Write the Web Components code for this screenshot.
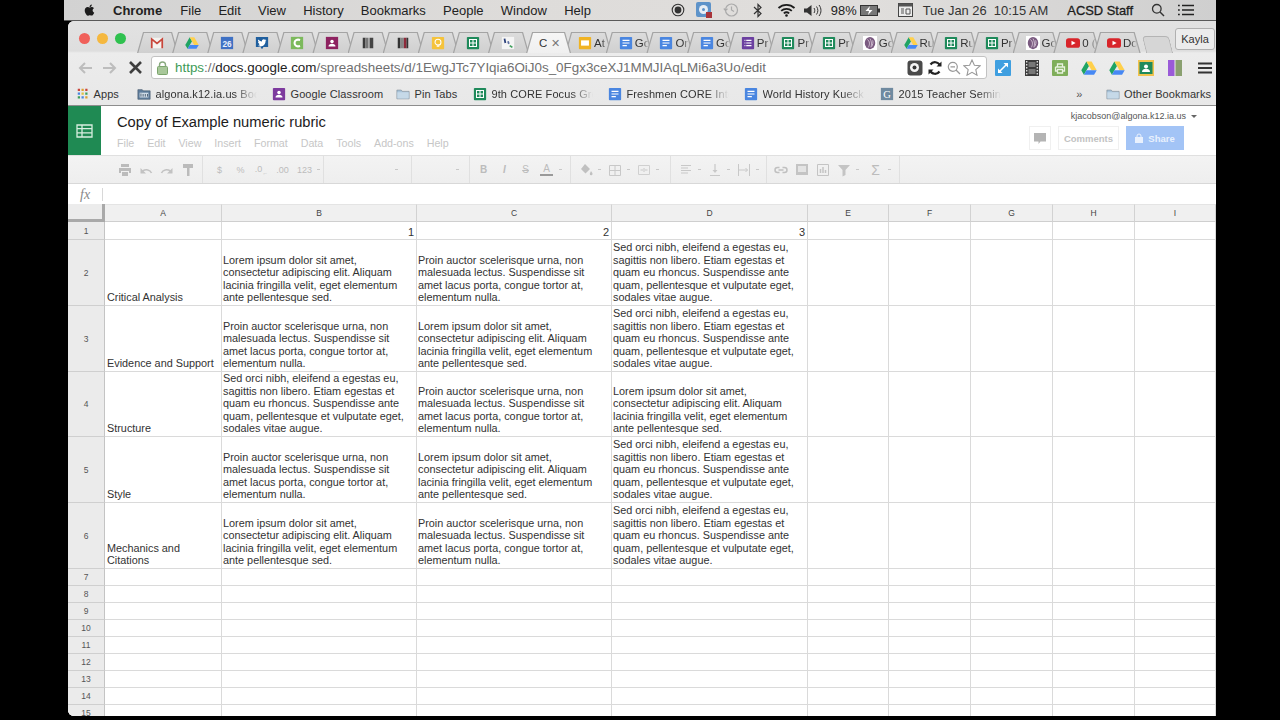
<!DOCTYPE html>
<html>
<head>
<meta charset="utf-8">
<title>Copy of Example numeric rubric</title>
<style>
  html, body { margin: 0; height: 720px; overflow: hidden; background: #000; font-family: "Liberation Sans", Arial, sans-serif; }
  #stage { width: 1152px; height: 716px; margin: 0 auto; display: flex; flex-direction: column; }
</style>
</head>
<body>
<div id="stage">
  <mac-menubar></mac-menubar>
  <browser-window>
    <tab-strip slot="tabs"></tab-strip>
    <nav-bar slot="nav"></nav-bar>
    <bookmarks-bar slot="bookmarks"></bookmarks-bar>
    <sheet-header></sheet-header>
    <sheet-toolbar></sheet-toolbar>
    <formula-bar></formula-bar>
    <sheet-grid></sheet-grid>
  </browser-window>
</div>

<script>
const FONT = '"Liberation Sans", Arial, sans-serif';

// favicons and bookmark icons, all on a 16 box
const DRIVE = `<path fill="#1fa463" d="M5.4 1.5 .3 10.3l2.6 4.4L8 5.9z"/><path fill="#ffd04b" d="M5.4 1.5h5.2l5.1 8.8h-5.2z"/><path fill="#4688f4" d="M2.9 14.7h10.2l2.6-4.4H5.5z"/>`;
const SHEET = `<rect x="1" y="1" width="14" height="14" rx="1" fill="#1f8a5b"/><path fill="none" stroke="#fff" stroke-width="1.2" d="M4 4h8v8H4zM4 8h8M8 4v8"/>`;
const DOC = `<rect x="1" y="1" width="14" height="14" rx="1" fill="#4a86e0"/><path stroke="#fff" stroke-width="1.3" d="M4 5h8M4 8h8M4 11h5"/>`;
const YT = `<rect x="0" y="2.5" width="16" height="11" rx="3" fill="#d8242a"/><path fill="#fff" d="M6.3 5.3v5.4L11 8z"/>`;
const PERSON = `<circle cx="8" cy="6.4" r="2" fill="#fff"/><path fill="#fff" d="M4 12c0-2.2 1.8-3.2 4-3.2s4 1 4 3.2z"/>`;
const CREST = `<rect x="0" y="0" width="16" height="16" fill="#fff"/><ellipse cx="8" cy="8" rx="6" ry="7" fill="#7a5a80"/><path fill="none" stroke="#d8c8d8" d="M5 4c3 2 3 6 1 9M8 3c2 3 2 7 1 10M11 5c1 2 0 5-1 7"/>`;
const FOLDER = `<path fill="#a9c4da" stroke="#7d8a96" stroke-width=".7" d="M1 3.5h5l1.2 1.5H15v8.5H1z"/><path fill="#c6d9e8" d="M1.5 6h13v7h-13z"/>`;
const ICONS = {
  gmail: `<rect x="1" y="2" width="14" height="12" fill="#f4f2ef"/><path fill="none" stroke="#c8473c" stroke-width="2" d="M2 14V3.5l6 5 6-5V14"/>`,
  drive: DRIVE,
  cal: `<rect x="1" y="1" width="14" height="14" fill="#3f71c4"/><text x="8" y="12.2" font-size="9.5" font-weight="700" text-anchor="middle" fill="#e6eefb" font-family="Liberation Sans">26</text>`,
  twitter: `<path fill="#1f5f9e" d="M1 1h14v11.5H9.7L8 15l-1.7-2.5H1z"/><g transform="translate(3 2.8) scale(.42)"><path fill="#fff" d="M23.95 4.57a10 10 0 0 1-2.82.77 4.96 4.96 0 0 0 2.16-2.72c-.95.55-2 .95-3.12 1.18a4.92 4.92 0 0 0-8.38 4.48C7.69 8.09 4.07 6.13 1.64 3.16a4.82 4.82 0 0 0-.67 2.48c0 1.71.87 3.21 2.19 4.1a4.9 4.9 0 0 1-2.23-.62v.06a4.92 4.92 0 0 0 3.95 4.83 5 5 0 0 1-2.21.08 4.94 4.94 0 0 0 4.6 3.42A9.87 9.87 0 0 1 0 19.54a14 14 0 0 0 7.56 2.21c9.05 0 14-7.5 14-13.98 0-.21 0-.42-.02-.63A9.94 9.94 0 0 0 24 4.59z"/></g>`,
  cgreen: `<rect x="1" y="1" width="14" height="14" fill="#7cb95c"/><path fill="none" stroke="#fff" stroke-width="2.4" d="M11.5 4.6C8 3.4 5.2 5 5.2 8s2.8 4.6 6.3 3.4"/>`,
  classroom: `<rect x="1" y="1" width="14" height="14" fill="#8e2260"/>${PERSON}`,
  classroomp: `<rect x="1" y="1" width="14" height="14" rx="1" fill="#7d3a9e"/>${PERSON}`,
  stripes: `<path fill="#3b3b3b" d="M2 2h3v12H2z"/><path fill="#777" d="M5 2h3v12H5z"/><path fill="#aaa" d="M8 2h2v12H8z"/><path fill="#444" d="M10 2h4v12h-4z"/>`,
  stripes2: `<path fill="#333" d="M2 2h3v12H2z"/><path fill="#888" d="M5 2h4v12H5z"/><path fill="#8e2a3a" d="M9 2h3v12H9z"/><path fill="#333" d="M12 2h2v12h-2z"/>`,
  keep: `<rect x="1" y="1" width="14" height="14" rx="1" fill="#f5c33b"/><circle cx="8" cy="7" r="3.4" fill="none" stroke="#fff" stroke-width="1.2"/><path stroke="#fff" stroke-width="1.4" d="M6.5 11.5h3"/>`,
  sheet: SHEET,
  pinwheel: `<rect x="1" y="1" width="14" height="14" fill="#f4f4f4"/><path stroke="#2a3f7a" stroke-width="2" d="M4 3l1 5"/><path stroke="#5c6f9f" stroke-width="2" d="M8 6l1 3"/><path stroke="#3fa05c" stroke-width="2" d="M10 11l3 2"/>`,
  slides: `<rect x="1" y="1" width="14" height="14" rx="1" fill="#f0b323"/><rect x="3.5" y="5" width="9" height="6" fill="#fff"/>`,
  doc: DOC,
  forms: `<rect x="1" y="1" width="14" height="14" rx="1" fill="#6b3fa0"/><path stroke="#fff" stroke-width="1.3" d="M6 5h6M6 8h6M6 11h6M4 5h1M4 8h1M4 11h1"/>`,
  crest: CREST,
  yt: YT,
  apps: `<rect x="1" y="1" width="3" height="3" fill="#c9463d"/><rect x="6" y="1" width="3" height="3" fill="#e0a030"/><rect x="11" y="1" width="3" height="3" fill="#c9463d"/><rect x="1" y="6" width="3" height="3" fill="#4a86e0"/><rect x="6" y="6" width="3" height="3" fill="#e0c040"/><rect x="11" y="6" width="3" height="3" fill="#3fa05c"/><rect x="1" y="11" width="3" height="3" fill="#3fa05c"/><rect x="6" y="11" width="3" height="3" fill="#4a86e0"/><rect x="11" y="11" width="3" height="3" fill="#e0a030"/>`,
  folder: FOLDER,
  bmfolder: `<path fill="#5e7d9c" stroke="#42566b" stroke-width=".7" d="M1 3h5l1 1.4h8V14H1z"/><rect x="3" y="6.5" width="10" height="5.5" fill="#cfdbe6"/><path stroke="#42566b" d="M4.5 7.5v3.5M7 8v3M9.5 8v3M12 8v3"/>`,
  gbox: `<rect x="1" y="1" width="14" height="14" fill="#6f8aa0"/><text x="8" y="12.5" font-size="12" text-anchor="middle" fill="#fff" font-family="Liberation Serif">G</text>`,
  arrows: `<rect x="0" y="0" width="16" height="16" rx="1" fill="#3f9fe0"/><path stroke="#fff" stroke-width="1.6" d="M4 12l8-8"/><path fill="#fff" d="M8.5 3H13v4.5zM3 8.5V13h4.5z"/>`,
  film: `<rect x="1" y="0" width="14" height="16" fill="#3c3c3c"/><rect x="4.5" y="2" width="7" height="5" fill="#777"/><rect x="4.5" y="9" width="7" height="5" fill="#777"/><path stroke="#ddd" stroke-dasharray="1.5 1.5" stroke-width="1.4" d="M2.7 1v14M13.3 1v14"/>`,
  print: `<rect x="0" y="0" width="16" height="16" rx="1" fill="#7fae5a"/><path fill="none" stroke="#e8f2df" stroke-width="1.3" d="M3.5 7h9v4h-2M5.5 11h-2V7M5.5 4h5v3h-5zM5.5 9.5h5V13h-5z"/>`,
  classg: `<rect x="0" y="0" width="16" height="16" fill="#f1c34e"/><rect x="1.5" y="2" width="13" height="12" fill="#1f8a5b"/>${PERSON}`,
  bars: `<rect x="1" y="0" width="6.5" height="16" fill="#9a5bd8"/><rect x="8.5" y="0" width="6.5" height="16" fill="#8aa070"/>`
};

class FavIcon extends HTMLElement {
  constructor() {
    super();
    const size = this.getAttribute('size') || 14;
    this.attachShadow({ mode: 'open' }).innerHTML = `
      <style>:host { display: inline-flex; flex: none; width: ${size}px; height: ${size}px; } svg { display: block; }</style>
      <svg width="${size}" height="${size}" viewBox="0 0 16 16">${ICONS[this.getAttribute('name')] || ''}</svg>`;
  }
}
customElements.define('fav-icon', FavIcon);

class MacMenubar extends HTMLElement {
  constructor() {
    super();
    const menus = ['File', 'Edit', 'View', 'History', 'Bookmarks', 'People', 'Window', 'Help'];
    this.attachShadow({ mode: 'open' }).innerHTML = `
      <style>
        :host { display: flex; flex: none; height: 20px; align-items: center; padding-left: 18px; color: #222;
          font: 13px ${FONT}; background: linear-gradient(90deg, #d2d2d2, #dedcda 40%, #e0dedc 70%, #cfcfcf); border-bottom: 1px solid #5a5a5a; }
        .left { display: flex; align-items: center; gap: 17.2px; }
        .app { font-weight: 700; margin-left: 16px; margin-right: 1px; }
        .right { margin-left: auto; display: flex; align-items: center; font-size: 12.9px; padding-right: 22px; }
        svg { display: block; flex: none; }
      </style>
      <svg width="15" height="16" viewBox="0 0 24 24"><path fill="#1c1c1c" d="M17.05 20.28c-.98.95-2.05.8-3.08.35-1.09-.46-2.09-.48-3.24 0-1.44.62-2.2.44-3.06-.35C2.79 15.25 3.51 7.59 9.05 7.31c1.35.07 2.29.74 3.08.8 1.18-.24 2.31-.93 3.57-.84 1.51.12 2.65.72 3.4 1.8-3.12 1.87-2.38 5.98.48 7.13-.57 1.5-1.31 2.99-2.54 4.09zM12.03 7.25c-.15-2.23 1.66-4.07 3.74-4.25.29 2.58-2.34 4.5-3.74 4.25z"/></svg>
      <div class="left"><span class="app">Chrome</span>${menus.map(m => `<span>${m}</span>`).join('')}</div>
      <div class="right">
        <svg width="14" height="14" viewBox="0 0 14 14" style="margin-right:11px"><circle cx="7" cy="7" r="5.8" fill="none" stroke="#333" stroke-width="1.1"/><circle cx="7" cy="7" r="3.4" fill="#333"/></svg>
        <svg width="16" height="17" viewBox="0 0 16 17" style="margin-right:11px"><rect width="15" height="15" rx="2" fill="#5e93c9"/><circle cx="7.5" cy="7.5" r="4.5" fill="#e8eef5"/><circle cx="7.5" cy="7.5" r="1.5" fill="#5e93c9"/><rect x="10" y="10" width="6" height="6" fill="#a8343a"/></svg>
        <svg width="16" height="16" viewBox="0 0 16 16" style="margin-right:14px"><circle cx="8.5" cy="8" r="6" fill="none" stroke="#aaa" stroke-width="1.2"/><path fill="none" stroke="#aaa" stroke-width="1.2" d="M8.5 4.5V8l2.5 1.5M.8 6.5l1.7 2 2-1.7"/></svg>
        <svg width="10" height="15" viewBox="0 0 10 15" style="margin-right:14px"><path fill="none" stroke="#333" stroke-width="1.2" d="M1 4l7 6.5L5 13.5V1.5l3 3L1 11"/></svg>
        <svg width="19" height="14" viewBox="0 0 19 14" style="margin-right:8px"><path fill="none" stroke="#1c1c1c" stroke-width="1.8" d="M1.5 5c4.5-4.3 11.5-4.3 16 0M4.2 7.8c3-2.7 7.6-2.7 10.6 0M6.8 10.4c1.6-1.3 3.8-1.3 5.4 0"/><circle cx="9.5" cy="12.5" r="1.3" fill="#1c1c1c"/></svg>
        <svg width="18" height="13" viewBox="0 0 18 13" style="margin-right:9px"><path fill="#333" d="M0 4.5h3L7.5 1v11L3 8.5H0z"/><path fill="none" stroke="#333" d="M10 4c1 1.4 1 3.6 0 5M12.5 2.5c1.800 2.4 1.800 5.600 0 8M15 1c2.600 3.200 2.600 7.800 0 11"/></svg>
        <span>98%</span>
        <svg width="20" height="11" viewBox="0 0 20 11" style="margin:0 18px 0 3px"><rect x=".5" y=".5" width="17" height="10" fill="#777" stroke="#333"/><rect x="18" y="3.5" width="2" height="4" fill="#333"/><path fill="#fff" d="M10 1 5.5 6H9l-1 4 4.5-5H9z"/></svg>
        <svg width="15" height="14" viewBox="0 0 15 14" style="margin-right:10px"><rect x=".5" y=".5" width="14" height="13" fill="#ececec" stroke="#444"/><rect x=".5" y=".5" width="14" height="3" fill="#555"/><path stroke="#555" d="M3 6h3M3 8h3M3 10h3M8 6h4v5H8z" fill="none"/></svg>
        <span style="color:#333;white-space:pre">Tue Jan 26  10:15 AM</span>
        <span style="margin-left:19px;color:#1c1c1c;-webkit-text-stroke:.3px #1c1c1c">ACSD Staff</span>
        <svg width="14" height="14" viewBox="0 0 14 14" style="margin-left:18px"><circle cx="5.8" cy="5.8" r="4.3" fill="none" stroke="#333" stroke-width="1.3"/><path stroke="#333" stroke-width="1.5" d="M9 9l4 4"/></svg>
        <svg width="16" height="12" viewBox="0 0 16 12" style="margin-left:13px"><path stroke="#222" stroke-width="1.4" d="M0 1.5h1.8M4 1.5h12M0 6h1.8M4 6h12M0 10.5h1.8M4 10.5h12"/></svg>
      </div>`;
  }
}
customElements.define('mac-menubar', MacMenubar);

class BrowserWindow extends HTMLElement {
  constructor() {
    super();
    this.attachShadow({ mode: 'open' }).innerHTML = `
      <style>
        :host { display: flex; flex-direction: column; flex: 1; min-height: 0; margin: 0 0 0 4px; overflow: hidden;
          border-radius: 6px 0 0 6px; background: #fff; }
        .chrome { flex: none; background: linear-gradient(#e2e2e2, #dedede 30px, #ececec 32px, #e8e8e8); border-bottom: 1px solid #8d8d8d; }
        .body { flex: 1; min-height: 0; display: flex; flex-direction: column; overflow: hidden; }
      </style>
      <div class="chrome"><slot name="tabs"></slot><slot name="nav"></slot><slot name="bookmarks"></slot></div>
      <div class="body"><slot></slot></div>`;
  }
}
customElements.define('browser-window', BrowserWindow);

class ChromeTab extends HTMLElement {
  constructor() {
    super();
    const active = this.hasAttribute('active');
    const icon = this.getAttribute('icon');
    this.attachShadow({ mode: 'open' }).innerHTML = `
      <style>
        :host { display: block; position: relative; flex: none; width: ${this.getAttribute('w') || 41}px; height: 21px; margin-right: -6px;
          clip-path: polygon(0 100%, 6px 0, calc(100% - 6px) 0, 100% 100%); background: #a4a4a4; font: 11.5px ${FONT}; color: #333; ${active ? 'z-index: 2;' : ''} }
        .face { height: 100%; box-sizing: border-box; margin: 1px 1px 0; display: flex; align-items: center; gap: 2px; padding: 0 0 1px 12px;
          clip-path: polygon(0 100%, 6px 0, calc(100% - 6px) 0, 100% 100%);
          background: ${active ? 'linear-gradient(#f6f6f6, #efefef)' : 'linear-gradient(#dcdcdc, #cfcfcf)'}; }
        .lbl { width: ${active ? 'auto' : '14px'}; overflow: hidden; white-space: nowrap; ${active ? '' : '-webkit-mask-image: linear-gradient(90deg, #000 55%, transparent); mask-image: linear-gradient(90deg, #000 55%, transparent);'} }
        .x { color: #777; font-size: 11px; margin-left: 2px; }
      </style>
      <div class="face">
        ${icon ? `<fav-icon name="${icon}" size="14"></fav-icon>` : ''}
        ${this.getAttribute('label') ? `<span class="lbl">${this.getAttribute('label')}</span>` : ''}
        ${active ? '<span class="x">✕</span>' : ''}
      </div>`;
  }
}
customElements.define('chrome-tab', ChromeTab);

class TabStrip extends HTMLElement {
  constructor() {
    super();
    const before = ['gmail', 'drive', 'cal', 'twitter', 'cgreen', 'classroom', 'stripes', 'stripes2', 'keep', 'sheet', 'pinwheel'];
    const after = [['slides', 'At'], ['doc', 'Go'], ['doc', 'Or'], ['doc', 'Go'], ['forms', 'Pr'], ['sheet', 'Pr'], ['sheet', 'Pr'],
      ['crest', 'Go'], ['drive', 'Ru'], ['sheet', 'Ru'], ['sheet', 'Pr'], ['crest', 'Go'], ['yt', '0 ('], ['yt', 'Do']];
    this.attachShadow({ mode: 'open' }).innerHTML = `
      <style>
        :host { display: flex; height: 32px; box-sizing: border-box; padding-top: 11px; align-items: flex-start; }
        .lights { flex: none; width: 69px; height: 21px; box-sizing: border-box; padding: 1px 0 0 11px; display: flex; gap: 7px; }
        .lights i { width: 11px; height: 11px; border-radius: 50%; }
        .new { flex: none; width: 27px; height: 17px; margin: 4px 0 0 9px; background: #d6d6d6; border: 1px solid #b4b4b4; border-bottom: none; border-radius: 4px 4px 0 0; transform: skewX(14deg); box-sizing: border-box; }
        .who { flex: none; margin: -4px 1px 0 auto; width: 40px; height: 22px; box-sizing: border-box; border: 1px solid #b0b0b0; border-radius: 3px; background: #ececec;
          font: 11px ${FONT}; color: #333; display: flex; align-items: center; justify-content: center; }
        .gap { flex: none; width: 3px; }
      </style>
      <div class="lights"><i style="background:#f0605a"></i><i style="background:#f5b83f"></i><i style="background:#2fc14f"></i></div>
      ${before.map(i => `<chrome-tab icon="${i}" w="41.1"></chrome-tab>`).join('')}
      <div class="gap"></div>
      <chrome-tab active label="C" w="45"></chrome-tab>
      ${after.map(([i, l]) => `<chrome-tab icon="${i}" label="${l}" w="46.7"></chrome-tab>`).join('')}
      <div class="new"></div>
      <div class="who">Kayla</div>`;
  }
}
customElements.define('tab-strip', TabStrip);

class NavBar extends HTMLElement {
  constructor() {
    super();
    const url = 'spreadsheets/d/1EwgJTc7YIqia6OiJ0s_0Fgx3ceXJ1MMJIAqLMi6a3Uo/edit';
    this.attachShadow({ mode: 'open' }).innerHTML = `
      <style>
        :host { display: flex; align-items: center; height: 29px; box-sizing: border-box; padding: 0 0 0 4px; }
        .btn { flex: none; width: 25.5px; display: flex; justify-content: center; }
        svg { display: block; flex: none; }
        .omni { flex: none; width: 836px; height: 23px; box-sizing: border-box; margin-left: 2.5px; display: flex; align-items: center; padding: 0 5px 0 5px;
          background: #fff; border: 1px solid #c2c2c2; border-radius: 3px; font: 13.4px ${FONT}; color: #6f6f6f; white-space: nowrap; }
        .g { color: #3d9b56; } .d { color: #222; }
        .url { margin-left: 7px; flex: 1; }
        .ext { display: flex; align-items: center; margin-left: 8px; gap: 12.6px; }
        .menu { margin-left: 15px; }
      </style>
      <div class="btn"><svg width="16" height="14" viewBox="0 0 16 14"><path fill="none" stroke="#bdbdbd" stroke-width="2" d="M15 7H3M8 2 3 7l5 5"/></svg></div>
      <div class="btn"><svg width="16" height="14" viewBox="0 0 16 14"><path fill="none" stroke="#bdbdbd" stroke-width="2" d="M1 7h12M8 2l5 5-5 5"/></svg></div>
      <div class="btn"><svg width="13" height="13" viewBox="0 0 13 13"><path stroke="#3e3e3e" stroke-width="2.6" d="M1 1l11 11M12 1 1 12"/></svg></div>
      <div class="omni">
        <svg width="11" height="14" viewBox="0 0 11 14"><rect x=".5" y="5.5" width="10" height="8" rx="1" fill="#a8c79a" stroke="#7ba56c"/><path fill="none" stroke="#8aaa80" stroke-width="1.4" d="M2.5 5.5V4a3 3 0 0 1 6 0v1.5"/></svg>
        <span class="url"><span class="g">https</span>://<span class="d">docs.google.com</span>/${url}</span>
        <svg width="16" height="16" viewBox="0 0 16 16"><rect x=".5" y=".5" width="15" height="15" rx="3" fill="#4a4a4a"/><circle cx="7.5" cy="7.5" r="4.5" fill="#f4f4f4"/><circle cx="7.5" cy="7.5" r="2" fill="#333"/></svg>
        <svg width="16" height="16" viewBox="0 0 16 16" style="margin-left:4px"><path fill="none" stroke="#222" stroke-width="2.2" d="M13 5.5A5.5 5.5 0 0 0 3.5 4.5M3 10.5a5.5 5.5 0 0 0 9.5 1"/><path fill="#222" d="M14.5 1.5v5h-5zM1.5 14.5v-5h5z"/></svg>
        <svg width="14" height="14" viewBox="0 0 14 14" style="margin-left:4px"><circle cx="5.8" cy="5.8" r="4.5" fill="none" stroke="#999" stroke-width="1.2"/><path stroke="#999" stroke-width="1.3" d="M9 9l4 4M3.5 5.8h4.5"/></svg>
        <svg width="18" height="17" viewBox="0 0 18 17" style="margin-left:2px"><path fill="#fff" stroke="#999" stroke-width="1.1" d="M9 1l2.4 5.2 5.6.6-4.2 3.8 1.2 5.600L9 13.300l-5 2.900 1.200-5.600L1 6.800l5.600-.6z"/></svg>
      </div>
      <div class="ext">
        <fav-icon name="arrows" size="16"></fav-icon>
        <fav-icon name="film" size="16"></fav-icon>
        <fav-icon name="print" size="16"></fav-icon>
        <fav-icon name="drive" size="16"></fav-icon>
        <fav-icon name="drive" size="16"></fav-icon>
        <fav-icon name="classg" size="16"></fav-icon>
        <fav-icon name="bars" size="16"></fav-icon>
      </div>
      <svg class="menu" width="14" height="12" viewBox="0 0 14 12"><path stroke="#333" stroke-width="2.2" d="M0 1.5h14M0 6h14M0 10.5h14"/></svg>`;
  }
}
customElements.define('nav-bar', NavBar);

class BookmarkItem extends HTMLElement {
  constructor() {
    super();
    const fade = this.hasAttribute('fade');
    this.attachShadow({ mode: 'open' }).innerHTML = `
      <style>
        :host { display: flex; flex: none; align-items: center; gap: 4.5px; }
        span { display: block; white-space: nowrap; width: ${this.getAttribute('w')}px; ${fade ? 'overflow: hidden; -webkit-mask-image: linear-gradient(90deg, #000 78%, transparent); mask-image: linear-gradient(90deg, #000 78%, transparent);' : ''} }
      </style>
      <fav-icon name="${this.getAttribute('icon')}" size="${this.getAttribute('size') || 14}"></fav-icon><span><slot></slot></span>`;
  }
}
customElements.define('bookmark-item', BookmarkItem);

class BookmarksBar extends HTMLElement {
  constructor() {
    super();
    this.attachShadow({ mode: 'open' }).innerHTML = `
      <style>
        :host { display: flex; align-items: center; height: 23px; padding-left: 9px; gap: 15px; font: 11px ${FONT}; letter-spacing: .1px; color: #333; }
        .more { margin-left: auto; font-size: 11px; color: #555; margin-right: 8px; }
        .last { margin-right: 5px; }
      </style>
      <bookmark-item icon="apps" size="12" w="28.5">Apps</bookmark-item>
      <bookmark-item icon="bmfolder" w="101.5" fade>algona.k12.ia.us Boo</bookmark-item>
      <bookmark-item icon="classroomp" w="90.5">Google Classroom</bookmark-item>
      <bookmark-item icon="folder" w="43.5">Pin Tabs</bookmark-item>
      <bookmark-item icon="sheet" w="101.5" fade>9th CORE Focus Gro</bookmark-item>
      <bookmark-item icon="doc" w="102.5" fade>Freshmen CORE Inte</bookmark-item>
      <bookmark-item icon="doc" w="102.5" fade>World History Kueck</bookmark-item>
      <bookmark-item icon="gbox" w="102" fade>2015 Teacher Semin</bookmark-item>
      <span class="more">»</span>
      <bookmark-item class="last" icon="folder" w="87">Other Bookmarks</bookmark-item>`;
  }
}
customElements.define('bookmarks-bar', BookmarksBar);

class SheetHeader extends HTMLElement {
  constructor() {
    super();
    const menu = ['File', 'Edit', 'View', 'Insert', 'Format', 'Data', 'Tools', 'Add-ons', 'Help'];
    this.attachShadow({ mode: 'open' }).innerHTML = `
      <style>
        :host { display: flex; flex: none; height: 49px; font-family: ${FONT}; background: #fff; }
        .logo { flex: none; width: 33px; display: flex; align-items: center; justify-content: center; background: #1f8a53; }
        .main { flex: none; padding: 6px 0 0 16px; }
        .title { font-size: 14.7px; color: #1c1c1c; line-height: 20px; }
        .menu { display: flex; gap: 12.9px; margin-top: 5px; font-size: 10.7px; line-height: 13px; color: #c6c6c6; }
        .side { margin-left: auto; padding: 4px 32px 0 0; display: flex; flex-direction: column; align-items: flex-end; }
        .mail { font-size: 9px; line-height: 13px; color: #555; margin-right: -13px; display: flex; gap: 5px; align-items: center; }
        .mail i { border: 3px solid transparent; border-top-color: #666; margin-top: 3px; }
        .btns { display: flex; gap: 7px; margin-top: 3px; }
        .b { height: 24px; box-sizing: border-box; display: flex; align-items: center; justify-content: center; font-size: 9.5px; font-weight: 700; border: 1px solid #f0f0f0; color: #c2c2c2; }
        .chat { width: 22px; } .com { width: 61px; }
        .share { width: 58px; background: #a3c4f6; border-color: #a3c4f6; color: #e9f1fd; gap: 5px; }
        svg { display: block; }
      </style>
      <div class="logo"><svg width="17" height="14" viewBox="0 0 17 14"><path fill="none" stroke="#d7eee0" stroke-width="1.3" d="M1 1h15v12H1zM1 4.7h15M1 8.8h15M6 1v12"/></svg></div>
      <div class="main">
        <div class="title">Copy of Example numeric rubric</div>
        <div class="menu">${menu.map(m => `<span>${m}</span>`).join('')}</div>
      </div>
      <div class="side">
        <div class="mail"><span>kjacobson@algona.k12.ia.us</span><i></i></div>
        <div class="btns">
          <div class="b chat"><svg width="12" height="11" viewBox="0 0 12 11"><path fill="#b4b4b4" d="M0 0h12v8.5H6.5L4.500 11V8.500H0z"/></svg></div>
          <div class="b com">Comments</div>
          <div class="b share"><svg width="8" height="10" viewBox="0 0 8 10"><rect y="4" width="8" height="6" fill="#e9f1fd"/><path fill="none" stroke="#e9f1fd" d="M2 4.5V3a2 2 0 0 1 4 0v1.5"/></svg>Share</div>
        </div>
      </div>`;
  }
}
customElements.define('sheet-header', SheetHeader);

// grey disabled toolbar glyphs, 14 box
const TOOLS = {
  print: `<path fill="#bbb" d="M3 1h8v3H3zM1 5h12v5h-2V8H3v2H1zM4 9h6v4H4z"/>`,
  undo: `<path fill="none" stroke="#c2c2c2" stroke-width="1.6" d="M12.5 10C11 6.500 7 6 3.500 8"/><path fill="#c2c2c2" d="M1.5 5v5.5H7z"/>`,
  redo: `<path fill="none" stroke="#c2c2c2" stroke-width="1.6" d="M1.5 10C3 6.500 7 6 10.500 8"/><path fill="#c2c2c2" d="M12.5 5v5.5H7z"/>`,
  paint: `<path fill="#bbb" d="M2 1h10v4H2zM6 5h2.5v8H6z"/>`,
  align: `<path stroke="#c8c8c8" stroke-width="1.2" d="M2 2.5h10M2 5h7M2 7.5h10M2 10h7"/>`,
  border: `<path fill="none" stroke="#c8c8c8" d="M1.5 2.5h11v10h-11zM7 2.5v10M1.5 7.5h11"/>`,
  merge: `<path fill="none" stroke="#d0d0d0" d="M1.5 2.5h11v9h-11z"/><path stroke="#c8c8c8" d="M3.5 7H6M8 7h2.5M7 5v4"/>`,
  fill: `<path fill="#c0c0c0" d="M6 1l5 5-4.500 4.500L2 6zM12 8c1 1.500 1.500 2 1.500 3a1.300 1.300 0 0 1-2.700 0c0-1 .6-1.500 1.200-3z"/>`,
  valign: `<path stroke="#c8c8c8" stroke-width="1.2" d="M7 1v8M2 12.5h10"/><path fill="#c8c8c8" d="M4.5 7h5L7 10z"/>`,
  wrap: `<path fill="none" stroke="#c8c8c8" d="M1.5 1v12M12.5 1v12M1.5 7h9M8.5 5l2 2-2 2"/>`,
  link: `<path fill="none" stroke="#c0c0c0" stroke-width="1.5" d="M5.5 4.5H3.500a2.500 2.500 0 0 0 0 5h2M8.500 4.500h2a2.500 2.500 0 0 1 0 5h-2M4.500 7h5"/>`,
  note: `<rect x="1" y="1" width="12" height="11" fill="#c4c4c4"/><rect x="3" y="3" width="8" height="6" fill="#e4e4e4"/>`,
  chart: `<path fill="none" stroke="#c4c4c4" d="M1.5 1.5h11v11h-11z"/><path stroke="#c4c4c4" stroke-width="1.5" d="M4.5 10V6M7 10V4M9.5 10V7"/>`,
  filter: `<path fill="#c4c4c4" d="M1 2h12L8.5 7v5l-3 1.5V7z"/>`
};

class ToolIcon extends HTMLElement {
  constructor() {
    super();
    this.attachShadow({ mode: 'open' }).innerHTML = `
      <style>:host { display: flex; flex: none; width: 21px; justify-content: center; align-items: center; height: 100%; } svg { display: block; }</style>
      <svg width="14" height="14" viewBox="0 0 14 14">${TOOLS[this.getAttribute('name')]}</svg>`;
  }
}
customElements.define('tool-icon', ToolIcon);

class SheetToolbar extends HTMLElement {
  constructor() {
    super();
    const t = n => `<tool-icon name="${n}"></tool-icon>`;
    const tx = (s, extra = '') => `<span class="t" style="${extra}">${s}</span>`;
    const dash = '<span class="dash"></span>';
    this.attachShadow({ mode: 'open' }).innerHTML = `
      <style>
        :host { display: flex; flex: none; height: 29px; box-sizing: border-box; background: linear-gradient(#f3f3f3, #eeeeee); border-top: 1px solid #e0e0e0; border-bottom: 1px solid #d8d8d8; font: 9px ${FONT}; color: #bcbcbc; }
        .g { display: flex; flex: none; height: 100%; align-items: center; box-sizing: border-box; border-right: 1px solid #e0e0e0; }
        .t { flex: none; width: 21px; text-align: center; }
        .dash { flex: none; width: 8px; height: 1px; background: linear-gradient(90deg, transparent 2px, #c8c8c8 2px, #c8c8c8 5px, transparent 5px); }
        .bi { font-weight: 700; font-size: 10px; }
        .a { border-bottom: 2px solid #9a9a9a; line-height: 10px; width: 13px; margin: 0 4px; text-align: center; font-size: 10px; }
      </style>
      <div class="g" style="width:135px;padding-left:46px">${t('print')}${t('undo')}${t('redo')}${t('paint')}</div>
      <div class="g" style="width:121px;padding-left:6px">${tx('$')}${tx('%')}${tx('.0<sub style="font-size:6px">←</sub>')}${tx('.00')}${tx('123', 'margin-left:1px')}${dash}</div>
      <div class="g" style="width:88px;justify-content:flex-end;padding-right:10px">${dash}</div>
      <div class="g" style="width:58px;justify-content:flex-end;padding-right:7px">${dash}</div>
      <div class="g" style="width:101px;padding-left:3px"><span class="t bi">B</span><span class="t bi" style="font-style:italic">I</span><span class="t" style="text-decoration:line-through;font-size:10px">S</span><span class="a">A</span>${dash}</div>
      <div class="g" style="width:100px;padding-left:4px">${t('fill')}${dash}${t('border')}${dash}${t('merge')}${dash}</div>
      <div class="g" style="width:96px;padding-left:4px">${t('align')}${dash}${t('valign')}${dash}${t('wrap')}${dash}</div>
      <div class="g" style="width:133px;padding-left:3px">${t('link')}${t('note')}${t('chart')}${t('filter')}${dash}<span class="t" style="font-size:14px;margin-left:3px">Σ</span>${dash}</div>`;
  }
}
customElements.define('sheet-toolbar', SheetToolbar);

class FormulaBar extends HTMLElement {
  constructor() {
    super();
    this.attachShadow({ mode: 'open' }).innerHTML = `
      <style>
        :host { display: flex; flex: none; height: 20px; align-items: center; background: #fff; }
        .fx { flex: none; width: 35px; box-sizing: border-box; padding-left: 12px; font: italic 14px "Liberation Serif", serif; color: #888; border-right: 1px solid #d8d8d8; line-height: 13px; }
      </style>
      <div class="fx">fx</div>`;
  }
}
customElements.define('formula-bar', FormulaBar);

class SheetGrid extends HTMLElement {
  constructor() {
    super();
    const L = 'Lorem ipsum dolor sit amet,\nconsectetur adipiscing elit. Aliquam\nlacinia fringilla velit, eget elementum\nante pellentesque sed.';
    const P = 'Proin auctor scelerisque urna, non\nmalesuada lectus. Suspendisse sit\namet lacus porta, congue tortor at,\nelementum nulla.';
    const S = 'Sed orci nibh, eleifend a egestas eu,\nsagittis non libero. Etiam egestas et\nquam eu rhoncus. Suspendisse ante\nquam, pellentesque et vulputate eget,\nsodales vitae augue.';
    const rows = [
      ['Critical Analysis', L, P, S],
      ['Evidence and Support', P, L, S],
      ['Structure', S, P, L],
      ['Style', P, L, S],
      ['Mechanics and\nCitations', L, P, S]
    ];
    const empty = '<div class="c"></div>'.repeat(5);
    let html = '<div class="corner"></div>' + 'ABCDEFGHI'.split('').map(c => `<div class="h">${c}</div>`).join('');
    html += '<div class="h r">1</div><div class="c"></div>' + [1, 2, 3].map(n => `<div class="c n">${n}</div>`).join('') + empty;
    rows.forEach((r, i) => {
      html += `<div class="h r">${i + 2}</div>` + r.map((t, j) => `<div class="c${j ? '' : ' first'}">${t}</div>`).join('') + empty;
    });
    for (let n = 7; n <= 15; n++) {
      html += `<div class="h r">${n}</div>` + '<div class="c"></div>'.repeat(9);
    }
    this.attachShadow({ mode: 'open' }).innerHTML = `
      <style>
        :host { display: grid; flex: 1; min-height: 0; overflow: hidden; align-content: start; background: #fff; font: 10.85px ${FONT}; color: #333;
          grid-template-columns: 37px 117px 195px 195px 196px 81px 82px 82px 82px 81px;
          grid-template-rows: 18px 18px 66px 66px 65px 66px 66px repeat(9, 17px); }
        .corner { background: #ececec; border-right: 3px solid #a9a9a9; border-bottom: 3px solid #a9a9a9; box-sizing: border-box; }
        .h { display: flex; align-items: center; justify-content: center; background: #f0f0f0; border-right: 1px solid #d2d2d2; border-bottom: 1px solid #cfcfcf; border-top: 1px solid #e4e4e4; box-sizing: border-box; font-size: 8.5px; color: #444; }
        .r { background: #ebebeb; border-top: none; border-right: 1px solid #c4c4c4; color: #555; }
        .c { box-sizing: border-box; border-right: 1px solid #dadada; border-bottom: 1px solid #dadada; padding: 0 1px 1px 1px; white-space: pre-line; line-height: 12.6px; display: flex; align-items: flex-end; overflow: hidden; }
        .first { padding-left: 2px; }
        .n { justify-content: flex-end; padding: 0 2px 0 0; font-size: 11px; color: #333; }
      </style>
      ${html}`;
  }
}
customElements.define('sheet-grid', SheetGrid);
</script>
</body>
</html>
